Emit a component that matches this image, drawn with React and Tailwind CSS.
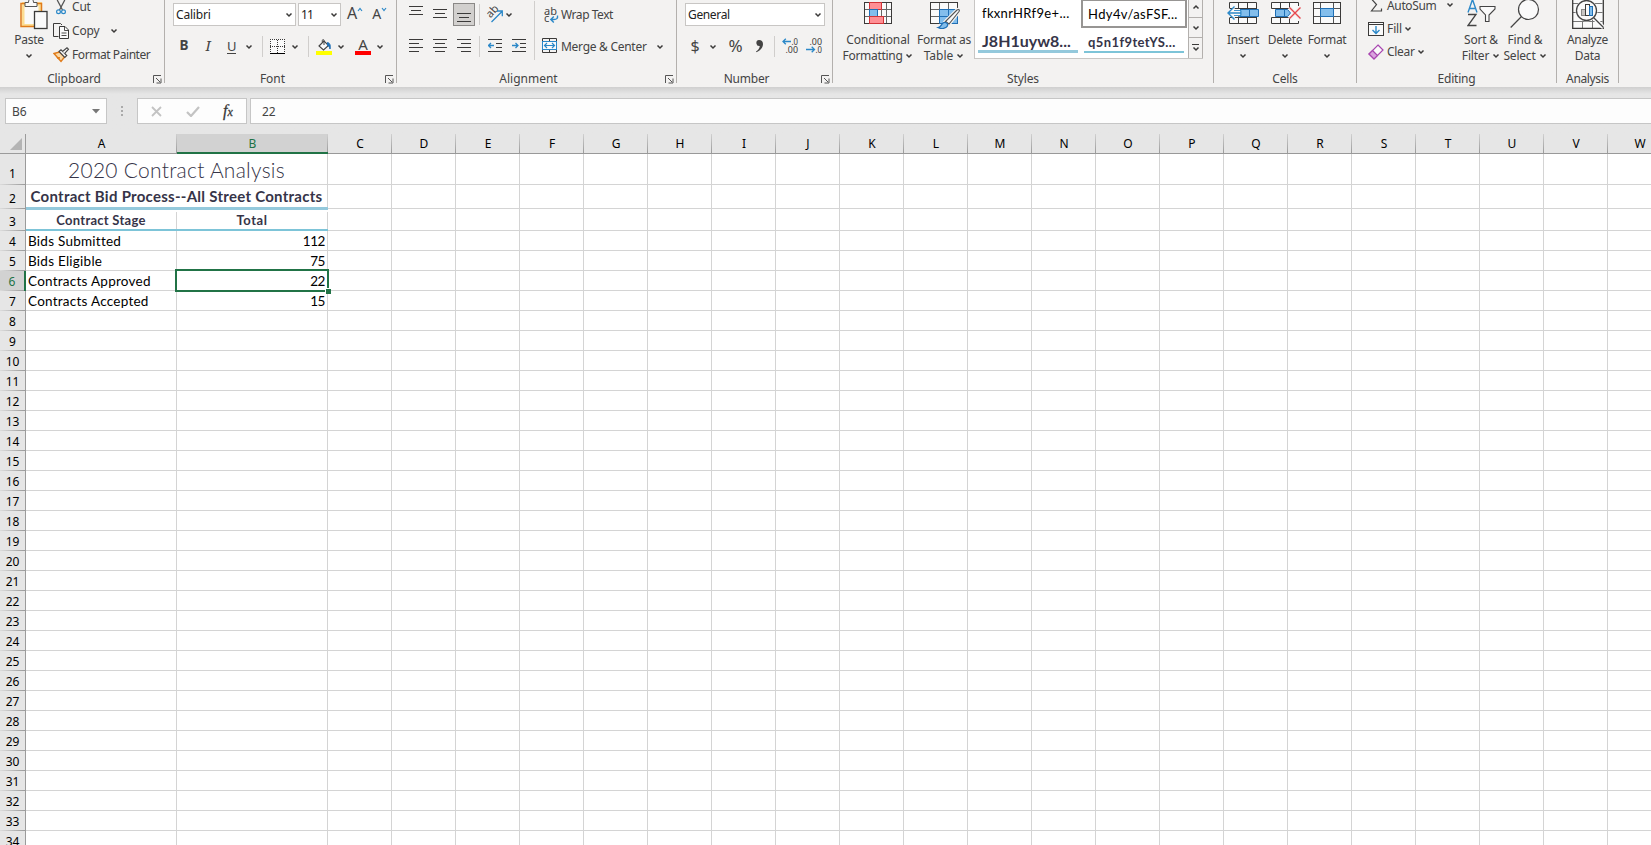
import React from 'react';

const Chev = ({ className = '' }) => (
  <svg className={`shrink-0 ${className}`} width="8" height="6" viewBox="0 0 8 6" fill="none">
    <path d="M1.500 1.500 4 4l2.500-2.500" stroke="#3b3a39" strokeWidth="1.500" />
  </svg>
);

const Launcher = () => (
  <svg width="9" height="9" viewBox="0 0 9 9" fill="none" stroke="#555" className="shrink-0">
    <path d="M.5 8V.5H8M3 3l4 4M8 3.500V8H3.500" />
  </svg>
);

const Sep = ({ className = '' }) => <div className={`w-px shrink-0 bg-[#d0cecc] ${className}`} />;

function Group({ label, width, launcher, pad = '', tracking = '', children }) {
  return (
    <section className={`flex h-[83px] shrink-0 flex-col border-r border-[#b3b0ad] ${width}`}>
      <div className="flex h-[72px] shrink-0">{children}</div>
      <div className="flex h-[11px] items-start">
        <div className={`flex-1 whitespace-nowrap text-center leading-[14px] ${pad} ${tracking}`}>{label}</div>
        {launcher && <div className="-ml-3 mr-[2px] mt-[3px]"><Launcher /></div>}
      </div>
    </section>
  );
}

const Lines = ({ rows, className = '' }) => (
  <svg className={`shrink-0 ${className}`} width="14" height="15" viewBox="0 0 14 15" shapeRendering="crispEdges" fill="#3b3a39">
    {rows.map(([x, w, y]) => <rect key={y} x={x} y={y} width={w} height="1" />)}
  </svg>
);

const PasteIcon = () => (
  <svg width="28" height="30" viewBox="0 0 28 30" fill="none">
    <rect x="2" y="2" width="20" height="24" fill="#fcdd93" />
    <rect x="1" y="3.500" width="20.500" height="23" stroke="#e07b1a" strokeWidth="1.500" />
    <rect x="4.500" y="6" width="14" height="18" fill="#fafafa" />
    <path d="M5 6.500V2.500h3.500C8.500 0 9.500-1 11-1s2.500 1 2.500 3.500H17v4z" fill="#fafafa" stroke="#555" />
    <rect x="14.500" y="11.500" width="12.500" height="17" fill="#fafafa" stroke="#3b3a39" strokeWidth="1.300" />
  </svg>
);
const CutIcon = () => (
  <svg width="16" height="16" viewBox="0 0 16 16" fill="none">
    <path d="M4.200 0l5.300 10M11.800 0L6.500 10" stroke="#555" strokeWidth="1.300" />
    <circle cx="5.500" cy="11.700" r="1.900" stroke="#2b88c8" strokeWidth="1.200" />
    <circle cx="10.500" cy="11.700" r="1.900" stroke="#2b88c8" strokeWidth="1.200" />
  </svg>
);
const CopyIcon = () => (
  <svg width="17" height="17" viewBox="0 0 17 17" fill="none" stroke="#3b3a39">
    <path d="M5.500 13.500H.5V.5h7L9 2" />
    <path d="M6.500 3.500h5.500l3.500 3.500v8.500h-9z" fill="#fafafa" />
    <path d="M11.500 3.500V7.500h4M8.500 10h5M8.500 12.500h5" strokeWidth=".9" />
  </svg>
);
const PainterIcon = () => (
  <svg width="17" height="16" viewBox="0 0 17 16" fill="none">
    <path d="M1 6.500l5.500-1.500 5 5L8 14.500z" fill="#fbd9a5" stroke="#e07b1a" strokeWidth="1.400" />
    <path d="M4 10.500l3 .3-2 1z" fill="#e07b1a" stroke="#e07b1a" />
    <path d="M6 4.500l2-1.700 5.800 5.700-2 2z" fill="#fafafa" stroke="#444" strokeWidth="1.100" />
    <path d="M9.500 4.500L14 .8l1.500 1.400-4 4.500" fill="#fafafa" stroke="#444" strokeWidth="1.100" />
  </svg>
);
const BordersIcon = () => (
  <svg width="15" height="15" viewBox="0 0 15 15" shapeRendering="crispEdges">
    <rect width="15" height="14" fill="#fafafa" />
    <path d="M0 .5h15M0 7.500h15M.5 0v14M7.500 1v13M14.500 0v14" stroke="#3b3a39" strokeDasharray="1 1" />
    <rect y="14" width="15" height="1" fill="#000" />
  </svg>
);
const FillIcon = () => (
  <svg width="16" height="16" viewBox="0 0 16 16" fill="none">
    <rect y="12" width="16" height="4" fill="#ff0" />
    <path d="M3 7l5-5 4.500 4.500L7.500 11z" fill="#fafafa" stroke="#444" strokeWidth="1.100" />
    <path d="M8 6V1.500C8 .3 6.300.3 6.300 1.500v2" stroke="#444" />
    <path d="M11.500 3.500c2.500.5 3.300 3 2.500 6.500-.4-2-1-3-2.500-3.500z" fill="#1f6fb5" stroke="#1f6fb5" />
  </svg>
);
const OrientIcon = () => (
  <svg width="17" height="17" viewBox="0 0 17 17" fill="none" overflow="visible">
    <text x="0" y="0" transform="translate(4.500 12.500) rotate(-48)" fontSize="11" fill="#444" fontFamily="Noto Sans">ab</text>
    <path d="M5.500 16L16 5.500M11 5h5.300v5.300" stroke="#2b88c8" strokeWidth="1.300" />
  </svg>
);
const WrapIcon = () => (
  <svg width="15" height="18" viewBox="0 0 15 18" fill="none" overflow="visible">
    <text x="0" y="8.500" fontSize="11" fill="#444" fontFamily="Noto Sans">ab</text>
    <text x="0" y="16" fontSize="11" fill="#444" fontFamily="Noto Sans">c</text>
    <path d="M13.500 9.500c.5 3-1 4-3.500 4H7M9.800 10.500L6.800 13.500l3 3" stroke="#2b88c8" strokeWidth="1.400" />
  </svg>
);
const MergeIcon = () => (
  <svg width="15" height="15" viewBox="0 0 15 15" fill="none">
    <path d="M.5 3V.5h14V3M.5 12v2.500h14V12M7.500.5V3M7.500 12v2.500" stroke="#3b3a39" />
    <rect x=".5" y="3.500" width="14" height="8" fill="#fafafa" stroke="#2b88c8" />
    <path d="M2.500 7.500h10M5 5L2.500 7.500 5 10M10 5l2.500 2.500L10 10" stroke="#2b88c8" strokeWidth="1.200" />
  </svg>
);
const IndentIcon = ({ right, className = '' }) => (
  <svg className={`shrink-0 ${className}`} width="15" height="15" viewBox="0 0 15 15" fill="none">
    <path d="M0 1.500h14M8 5.500h6M8 9.500h6M0 13.500h14" stroke="#3b3a39" />
    {right ? <path d="M0 7.500h6M3.500 5L6 7.500 3.500 10" stroke="#2b88c8" strokeWidth="1.300" />
      : <path d="M.5 7.500H6M3 5L.5 7.500 3 10" stroke="#2b88c8" strokeWidth="1.300" />}
  </svg>
);
const DecimalIcon = ({ inc, className = '' }) => (
  <svg className={`shrink-0 ${className}`} width="17" height="17" viewBox="0 0 17 17" fill="none" overflow="visible">
    <g fontSize="9.500" fill="#3b3a39" fontFamily="Noto Sans">
      <text x="16" y="7.500" textAnchor="end" textLength={inc ? 6.5 : 12.5} lengthAdjust="spacingAndGlyphs">{inc ? '.0' : '.00'}</text>
      <text x="16" y="16" textAnchor="end" textLength={inc ? 12.5 : 6.5} lengthAdjust="spacingAndGlyphs">{inc ? '.00' : '.0'}</text>
    </g>
    {inc ? <path d="M1 4.500h8M3.800 1.700L1 4.500l2.800 2.800" stroke="#2b88c8" strokeWidth="1.300" />
      : <path d="M0 12.500h8.500M5.700 9.700l2.800 2.800-2.800 2.800" stroke="#2b88c8" strokeWidth="1.300" />}
  </svg>
);
const CondIcon = () => (
  <svg width="28" height="22" viewBox="0 0 28 22" fill="none">
    <rect width="28" height="22" fill="#fafafa" />
    <path d="M0 7.500h28M0 14.500h28M5.500 0v22M17.500 0v22M22.500 0v22" stroke="#666" />
    <rect x=".5" y=".5" width="27" height="21" stroke="#3b3a39" />
    <rect x="5.500" y=".5" width="12" height="7" fill="#ff8f94" stroke="#d13438" />
    <rect x="5.500" y="7.500" width="8" height="7" fill="#83beec" stroke="#1f6fb5" />
    <rect x="5.500" y="14.500" width="14" height="7" fill="#ff8f94" stroke="#d13438" />
  </svg>
);
const TableIcon = () => (
  <svg width="30" height="27" viewBox="0 0 30 27" fill="none">
    <rect width="28" height="22" fill="#fafafa" />
    <path d="M0 7.500h28M0 14.500h28M9.500 0v22M18.500 0v22" stroke="#666" />
    <rect x=".5" y=".5" width="27" height="21" stroke="#3b3a39" />
    <path d="M9.500 7.500h18v14h-18zM9.500 14.500h18M18.500 7.500v14" fill="#83beec" stroke="#1f6fb5" />
    <path d="M15.500 19.500L27 8c1.500-1.200 3 0 2 1.500L19 22z" fill="#fafafa" stroke="#f3f2f1" strokeWidth="3.500" />
    <path d="M15.500 19.500L27 8c1.500-1.200 3 0 2 1.500L19 22z" fill="#fafafa" stroke="#555" strokeWidth="1.100" />
    <path d="M8 25.500c3 0 3-3 5-4.500s5 0 4.700 2.200C17 26.500 11 27.500 8 25.500z" fill="#83beec" stroke="#1f6fb5" strokeWidth="1.200" />
  </svg>
);
const InsertIcon = () => (
  <svg width="33" height="22" viewBox="0 0 33 22" fill="none">
    <rect x="2" width="28" height="22" fill="#fafafa" />
    <path d="M2.500 6V.5h27V21.500h-27V16M2.500 6.500h27M2.500 15.500h27M11.500 0v22M20.500 0v22" stroke="#3b3a39" />
    <path d="M12 7.500h19.500v7H12z M22.500 7.500v7" fill="#83beec" stroke="#1f6fb5" />
    <path d="M13 7H7.500l1-3L1 10.800l7.500 7-1-3.500H13z" fill="#fafafa" />
    <path d="M7.500 4.500L1 11l6.500 6.500M2 11h12" stroke="#2b88c8" strokeWidth="1.400" />
    <path d="M7 8.500h7v5H7" stroke="#2b88c8" strokeWidth=".9" />
  </svg>
);
const DeleteIcon = () => (
  <svg width="31" height="22" viewBox="0 0 31 22" fill="none">
    <rect width="28" height="22" fill="#fafafa" />
    <path d="M.5 6.500V.5h27V4M.5 15.500v6h27V19M.5 6.500h20M.5 15.500h20M9.500 0v6M18.500 0v6M9.500 16v6M18.500 16v6" stroke="#3b3a39" />
    <path d="M4.500 7.500h12l3 3.500-3 3.500h-12zM13.500 7.500v7" fill="#83beec" stroke="#1f6fb5" />
    <path d="M18.500 5.500l11 11M29.500 5.500l-11 11" stroke="#f3f2f1" strokeWidth="4" />
    <path d="M18.500 5.500l11 11M29.500 5.500l-11 11" stroke="#e8484d" strokeWidth="1.400" />
  </svg>
);
const FormatIcon = () => (
  <svg width="28" height="22" viewBox="0 0 28 22" fill="none">
    <rect width="28" height="22" fill="#fafafa" />
    <path d="M0 6.500h28M0 14.500h28M7.500 0v22M20.500 0v22" stroke="#555" />
    <rect x=".5" y=".5" width="27" height="21" stroke="#3b3a39" />
    <rect x="7.500" y="6.500" width="13" height="8" fill="#83beec" stroke="#1f6fb5" />
  </svg>
);
const SumIcon = () => (
  <svg width="13" height="12" viewBox="0 0 13 12" fill="none">
    <path d="M1.500-1l5 5.500L1.500 11H11.500V8.500" stroke="#444" strokeWidth="1.200" />
  </svg>
);
const FillDownIcon = () => (
  <svg width="16" height="14" viewBox="0 0 16 14" fill="none">
    <rect x=".5" y=".5" width="15" height="13" fill="#fafafa" stroke="#3b3a39" />
    <path d="M0 2.500h16" stroke="#3b3a39" />
    <path d="M8 4v7.500M4.500 8L8 11.500 11.500 8" stroke="#2b88c8" strokeWidth="1.400" />
  </svg>
);
const ClearIcon = () => (
  <svg width="16" height="16" viewBox="0 0 16 16" fill="none" stroke="#a846b0" strokeWidth="1.200">
    <path d="M10 1l5 5-9 9-5-5z" fill="#fafafa" />
    <path d="M4.500 6.500l5 5L6 15l-5-5z" fill="#d9a3de" />
  </svg>
);
const SortIcon = () => (
  <svg width="29" height="27" viewBox="0 0 29 27" fill="none">
    <path d="M1 12.500L5.500-.5 10 12.500M2.500 8.500h6" stroke="#2b88c8" strokeWidth="1.400" />
    <path d="M1 14.500h8L1 25.500h8.500" stroke="#444" strokeWidth="1.300" />
    <path d="M13 6.500h15v2.500l-6 6v6.500h-3.500V15l-5.500-6z" fill="#fafafa" stroke="#444" strokeWidth="1.100" />
  </svg>
);
const FindIcon = () => (
  <svg width="30" height="28" viewBox="0 0 30 28" fill="none" stroke="#444" strokeWidth="1.200">
    <circle cx="18.500" cy="9.500" r="10" fill="#fafafa" />
    <path d="M11.500 16.500L.7 27.500" />
  </svg>
);
const AnalyzeIcon = () => (
  <svg width="32" height="29" viewBox="0 0 32 29" fill="none">
    <rect width="31" height="28.500" fill="#fafafa" />
    <path d="M.5 3.500h30M.5 12.500h30M.5 21.500h30M10.500 19v9M20.500 19v9" stroke="#777" />
    <path d="M.7 0v28.300h30.600V0" stroke="#3b3a39" strokeWidth="1.300" />
    <path d="M22 18l9.500 9.500" stroke="#fafafa" strokeWidth="4" />
    <circle cx="14.500" cy="10.500" r="11" fill="#fafafa" />
    <circle cx="14.500" cy="10.500" r="10" fill="#fafafa" stroke="#444" strokeWidth="1.300" />
    <path d="M21.500 17.500L31.500 27.500" stroke="#444" strokeWidth="1.300" />
    <rect x="9.500" y="9.500" width="4" height="6" fill="#c8c6c4" stroke="#888" />
    <rect x="13.500" y="4.500" width="4" height="11" fill="#fafafa" stroke="#3b3a39" />
    <rect x="17.500" y="6.500" width="3" height="9" fill="#83beec" stroke="#1f6fb5" />
  </svg>
);

const Big = ({ icon, l1, l2, chev, width, l1c = '', l2c = '', iconH = 'h-[32px]', ml = '' }) => (
  <div className={`flex shrink-0 flex-col items-center whitespace-nowrap ${width} ${ml}`}>
    <div className={`flex w-full justify-center ${iconH}`}>{icon}</div>
    <div className={`h-4 leading-4 ${l1c}`}>{l1}</div>
    <div className="flex h-4 items-center gap-[3px] leading-4">
      {l2 && <span className={l2c}>{l2}</span>}
      {chev && <Chev />}
    </div>
  </div>
);

function Ribbon() {
  return (
    <header className="flex h-[87px] shrink-0 overflow-hidden bg-[#f3f2f1] text-[12px] text-[#444]">
      <Group label="Clipboard" width="w-[165px]" launcher pad="pr-[17px]" tracking="tracking-[-0.100px]">
        <Big width="w-[38px]" ml="ml-[10px]" icon={<div className="pl-[9px]"><PasteIcon /></div>} l1="Paste" chev l1c="tracking-[-0.300px]" />
        <div className="ml-[5px] flex flex-col whitespace-nowrap">
          <div className="flex h-[19px]"><CutIcon /><span className="ml-[3px] leading-[14px] tracking-[-0.200px]">Cut</span></div>
          <div className="flex h-6 items-center"><CopyIcon /><span className="ml-[2px] tracking-[-0.200px]">Copy</span><Chev className="ml-[11px]" /></div>
          <div className="flex h-6 items-center"><PainterIcon /><span className="ml-[2px] tracking-[-0.430px]">Format Painter</span></div>
        </div>
      </Group>

      <Group label="Font" width="w-[232px]" launcher pad="pr-[17px]">
        <div className="ml-2 flex flex-col">
          <div className="mt-[3px] flex h-[23px] items-center">
            <div className="flex h-[23px] w-[123px] items-center justify-between border border-[#c8c6c4] bg-white pl-[2px] pr-[2px] text-[#222]"><span className="tracking-[-0.200px]">Calibri</span><Chev /></div>
            <div className="ml-[2px] flex h-[23px] w-[43px] items-center justify-between border border-[#c8c6c4] bg-white pl-[2px] pr-[2px] text-[#222]"><span className="tracking-[-0.800px]">11</span><Chev /></div>
            <span className="-mt-[3px] ml-[6px] text-[16px] leading-none">A</span>
            <svg className="mb-[11px]" width="6" height="5" viewBox="0 0 6 5" fill="none"><path d="M1 4l2-2.500L5 4" stroke="#2b88c8" strokeWidth="1.200" /></svg>
            <span className="-mt-px ml-[9px] text-[14px] leading-none">A</span>
            <svg className="mb-[11px]" width="6" height="5" viewBox="0 0 6 5" fill="none"><path d="M1 1l2 2.500L5 1" stroke="#2b88c8" strokeWidth="1.200" /></svg>
          </div>
          <div className="mt-[10px] flex h-[21px] items-center">
            <span className="-mt-[2px] ml-[6px] w-[10px] text-center text-[13.500px] font-bold">B</span>
            <span className="-mt-[2px] ml-[14px] w-[10px] text-center font-['Noto_Serif','Liberation_Serif',serif] text-[14px] italic">I</span>
            <span className="ml-[14px] w-[9px] border-b border-[#444] text-center text-[13px] leading-[14px]">U</span>
            <Chev className="ml-[9px]" />
            <Sep className="ml-[9px] h-[21px]" />
            <div className="ml-[7px]"><BordersIcon /></div>
            <Chev className="ml-[6px]" />
            <Sep className="ml-[9px] h-[21px]" />
            <div className="ml-[7px]"><FillIcon /></div>
            <Chev className="ml-[5px]" />
            <div className="ml-[10px] flex w-4 flex-col items-center"><span className="h-3 text-[15px] leading-[10px]">A</span><div className="h-[4px] w-4 bg-[#f00]" /></div>
            <Chev className="ml-[5px]" />
          </div>
        </div>
      </Group>

      <Group label="Alignment" width="w-[280px]" launcher pad="pr-[17px]">
        <div className="ml-3 flex flex-col">
          <div className="mt-[3px] flex h-[23px] items-center">
            <Lines rows={[[0, 14, 0], [2, 10, 4], [0, 14, 8]]} className="-mt-[2px]" />
            <Lines className="-mt-[2px] ml-[10px]" rows={[[0, 14, 3], [2, 10, 7], [0, 14, 11]]} />
            <div className="ml-[6px] flex h-[23px] w-[22px] items-end justify-center border border-[#8a8886] bg-[#d2d0ce] pb-[2px]"><Lines rows={[[0, 14, 5], [2, 10, 9], [0, 14, 13]]} /></div>
            <Sep className="ml-[4px] h-[21px]" />
            <div className="ml-[6px] -mt-px"><OrientIcon /></div>
            <Chev className="ml-[2px]" />
          </div>
          <div className="mt-[10px] flex h-[21px] items-center">
            <Lines rows={[[0, 14, 0], [0, 10, 4], [0, 14, 8], [0, 10, 12]]} />
            <Lines className="ml-[10px]" rows={[[0, 14, 0], [2, 10, 4], [0, 14, 8], [2, 10, 12]]} />
            <Lines className="ml-[10px]" rows={[[0, 14, 0], [4, 10, 4], [0, 14, 8], [4, 10, 12]]} />
            <Sep className="ml-[8px] h-[21px]" />
            <IndentIcon className="ml-[8px] -mt-[2px]" />
            <IndentIcon className="ml-[9px] -mt-[2px]" right />
          </div>
        </div>
        <Sep className="ml-[7px] mt-px h-[59px]" />
        <div className="ml-[7px] flex flex-col whitespace-nowrap">
          <div className="mt-[3px] flex h-[23px] items-center"><div className="ml-[2px]"><WrapIcon /></div><span className="ml-[2px] tracking-[-0.450px]">Wrap Text</span></div>
          <div className="mt-[9px] flex h-[23px] items-center"><div className="-mt-[3px]"><MergeIcon /></div><span className="ml-[4px] tracking-[-0.280px]">Merge &amp; Center</span><Chev className="ml-[9px]" /></div>
        </div>
      </Group>

      <Group label="Number" width="w-[156px]" launcher pad="pr-[17px]" tracking="tracking-[-0.200px]">
        <div className="ml-2 flex flex-col">
          <div className="mt-[3px] flex h-[23px] w-[140px] items-center justify-between border border-[#c8c6c4] bg-white px-[2px] text-[#222]"><span className="tracking-[-0.350px]">General</span><Chev /></div>
          <div className="mt-[10px] flex h-[21px] items-center">
            <span className="-mt-px ml-[5px] w-[10px] text-center text-[16px] leading-[20px]">$</span>
            <Chev className="ml-[9px]" />
            <span className="-mt-px ml-[10px] w-[16px] text-center text-[17px] leading-[20px] tracking-[-1px]">%</span>
            <svg className="-mt-px ml-[12px]" width="9" height="14" viewBox="0 0 9 14"><path d="M4 1a3 3 0 1 0 .8 6C4.500 9.500 3 11.500 1 12.500l.5.7C5.500 11.500 8 8.500 8 5 8 2.500 6.500 1 4 1z" fill="#444" /></svg>
            <Sep className="ml-[10px] h-[21px]" />
            <DecimalIcon inc className="ml-[7px] -mt-[2px]" />
            <DecimalIcon className="ml-[7px] -mt-[2px]" />
          </div>
        </div>
      </Group>

      <Group label="Styles" width="w-[381px]" tracking="tracking-[-0.100px]">
        <Big width="w-[70px]" ml="ml-[10px]" icon={<div className="pt-[2px]"><CondIcon /></div>} l1="Conditional" l2="Formatting" chev l1c="tracking-[-0.100px]" l2c="tracking-[-0.300px]" />
        <Big width="w-[62px]" icon={<div className="pl-[2px] pt-[2px]"><TableIcon /></div>} l1="Format as" l2="Table" chev l1c="tracking-[-0.270px]" />
        <div className="ml-[-1px] flex h-[59px] border-b border-l border-[#c8c6c4] bg-white font-['Lato'] text-[13px] text-black">
          <div className="flex w-[106px] flex-col whitespace-nowrap pl-[3px]">
            <div className="h-[28px] pl-1 leading-[27px] tracking-[0.320px]">fkxnrHRf9e+...</div>
            <div className="h-[25px] w-[100px] border-b-[3px] border-[#94c9dc] pl-1 text-[16px] font-bold leading-[25px] text-[#363448]">J8H1uyw8...</div>
          </div>
          <div className="flex w-[107px] flex-col whitespace-nowrap">
            <div className="h-[28px] w-[106px] border-2 border-t border-[#979593] pl-[5px] leading-[26px] tracking-[0.400px]">Hdy4v/asFSF...</div>
            <div className="ml-[3px] h-[25px] w-[100px] border-b-2 border-[#7dc4d8] pl-1 font-bold leading-[28px] tracking-[0.400px] text-[#363448]">q5n1f9tetYS...</div>
          </div>
          <div className="flex w-[15px] flex-col border-x border-[#b3b0ad] bg-[#f3f2f1]">
            <div className="flex h-[18px] items-center justify-center border-b border-[#b3b0ad] pb-[4px]"><Chev className="rotate-180" /></div>
            <div className="flex h-[20px] items-center justify-center border-b border-[#b3b0ad]"><Chev /></div>
            <div className="flex flex-1 flex-col items-center justify-center gap-px"><div className="h-px w-[7px] bg-[#3b3a39]" /><Chev /></div>
          </div>
        </div>
      </Group>

      <Group label="Cells" width="w-[143px]" tracking="tracking-[-0.200px]">
        <Big width="w-[44px]" ml="ml-[7px]" icon={<div className="pt-[2px]"><InsertIcon /></div>} l1="Insert" chev l1c="tracking-[-0.200px]" />
        <Big width="w-[40px]" icon={<div className="pl-[2px] pt-[2px]"><DeleteIcon /></div>} l1="Delete" chev l1c="tracking-[-0.350px]" />
        <Big width="w-[44px]" icon={<div className="pt-[2px]"><FormatIcon /></div>} l1="Format" chev l1c="tracking-[-0.350px]" />
      </Group>

      <Group label="Editing" width="w-[200px]" tracking="tracking-[-0.200px]">
        <div className="ml-[11px] flex w-[88px] flex-col whitespace-nowrap">
          <div className="flex h-[17px]"><div className="ml-[2px]"><SumIcon /></div><span className="ml-[4px] leading-[12px] tracking-[-0.350px]">AutoSum</span><Chev className="ml-[10px] mt-[2px]" /></div>
          <div className="flex h-[23px] items-center"><FillDownIcon /><span className="ml-[3px] tracking-[-0.100px]">Fill</span><Chev className="ml-[2px]" /></div>
          <div className="flex h-[23px] items-center"><ClearIcon /><span className="ml-[3px] tracking-[-0.300px]">Clear</span><Chev className="ml-[2px]" /></div>
        </div>
        <Big width="w-[50px]" icon={<SortIcon />} l1="Sort &amp;" l2="Filter" chev l1c="tracking-[-0.200px]" l2c="tracking-[-0.200px]" />
        <Big width="w-[38px]" icon={<FindIcon />} l1="Find &amp;" l2="Select" chev l1c="tracking-[-0.200px]" l2c="tracking-[-0.200px]" />
      </Group>

      <Group label="Analysis" width="w-[62px]" tracking="tracking-[-0.350px]">
        <Big width="w-[61px]" icon={<AnalyzeIcon />} l1="Analyze" l2="Data" l1c="tracking-[-0.350px]" l2c="tracking-[-0.300px]" />
      </Group>
    </header>
  );
}

function FormulaBar() {
  return (
    <div className="flex h-[47px] shrink-0 bg-[#e6e6e6] bg-linear-to-b from-[#cfcfcf] to-[#e6e6e6] to-[7px] pl-[5px] pt-[11px] text-[13px] text-[#444]">
      <div className="flex h-[26px] w-[102px] items-center justify-between border border-[#c6c6c6] bg-[#fdfdfd] pl-[6px] pr-[6px]">
        <span className="pt-px text-[12px]">B6</span>
        <svg width="8" height="5" viewBox="0 0 8 5"><path d="M0 0h8L4 4.500z" fill="#777" /></svg>
      </div>
      <div className="ml-[14px] flex h-[26px] w-[2px] flex-col items-center justify-center gap-[2px]">
        <i className="h-[2px] w-[2px] bg-[#aaa]" /><i className="h-[2px] w-[2px] bg-[#aaa]" /><i className="h-[2px] w-[2px] bg-[#aaa]" />
      </div>
      <div className="ml-[14px] flex h-[26px] w-[110px] items-center border border-[#c6c6c6] bg-[#fdfdfd]">
        <svg className="ml-[13px]" width="11" height="11" viewBox="0 0 11 11"><path d="M1 1l9 9M10 1L1 10" stroke="#c3c3c3" strokeWidth="1.800" /></svg>
        <svg className="ml-[24px]" width="14" height="11" viewBox="0 0 14 11" fill="none"><path d="M1 6l4 4 8-9" stroke="#c3c3c3" strokeWidth="2.200" /></svg>
        <span className="-mt-px ml-[23px] font-['Liberation_Serif',serif] text-[16px] italic leading-none text-[#333] [-webkit-text-stroke:0.300px_#444]">f<span className="text-[12px]">x</span></span>
      </div>
      <div className="ml-[3px] flex h-[26px] flex-1 items-center border border-r-0 border-[#c6c6c6] bg-[#fdfdfd] pl-[11px]"><span className="pt-px text-[12px]">22</span></div>
    </div>
  );
}

const COLS = 'ABCDEFGHIJKLMNOPQRSTUVW'.split('');
const ROWS = Array.from({ length: 34 }, (_, i) => i + 1);
const DATA = {
  4: ['Bids Submitted', '112'],
  5: ['Bids Eligible', '75'],
  6: ['Contracts Approved', '22'],
  7: ['Contracts Accepted', '15'],
};
const rowHeight = (r) => (r === 1 ? 'h-[31px]' : r === 2 ? 'h-[24px]' : r === 3 ? 'h-[22px]' : 'h-5');
const line = 'border-b border-r border-[#d4d4d4]';

function Leading({ r }) {
  if (r === 1) {
    return <div className={`flex w-[302px] shrink-0 items-center justify-center whitespace-nowrap pt-px text-[21px] font-light tracking-[0.260px] text-[#363448] ${line}`}>2020 Contract Analysis</div>;
  }
  if (r === 2) {
    return (
      <div className={`relative flex w-[302px] shrink-0 items-center justify-center whitespace-nowrap text-[15px] font-bold tracking-[0.270px] text-[#363448] ${line}`}>
        Contract Bid Process--All Street Contracts
        <div className="absolute -bottom-[2px] -right-px left-0 h-[3px] bg-[#94c9dc]" />
      </div>
    );
  }
  if (r === 3) {
    return (
      <div className="flex w-[302px] shrink-0 border-b-2 border-[#7dc4d8] pt-[3px] text-[13px] font-bold tracking-[0.270px] text-[#363448]">
        <div className="flex w-[151px] items-center justify-center border-r border-[#d4d4d4]">Contract Stage</div>
        <div className="flex w-[151px] items-center justify-center border-r border-[#d4d4d4] tracking-[0.600px]">Total</div>
      </div>
    );
  }
  const [a, b] = DATA[r] || ['', ''];
  return (
    <>
      <div className={`flex w-[151px] shrink-0 items-center whitespace-nowrap pl-[2px] pt-[2px] text-[13.500px] tracking-[0.250px] ${line}`}>{a}</div>
      <div className={`relative flex w-[151px] shrink-0 items-center justify-end pr-[2px] pt-[2px] text-[13.500px] tracking-[-0.450px] ${line}`}>
        {b}
        {r === 6 && (
          <>
            <div className="absolute -inset-[2px] z-10 border-2 border-[#217346]" />
            <div className="absolute -bottom-[4px] -right-[4px] z-20 h-[6px] w-[6px] border-l border-t border-white bg-[#217346]" />
          </>
        )}
      </div>
    </>
  );
}

function Sheet() {
  return (
    <main className="flex min-h-0 flex-1 flex-col overflow-hidden bg-white text-black">
      <div className="flex h-5 shrink-0 bg-[#e6e6e6] text-[12px]">
        <div className="flex w-[26px] shrink-0 items-end justify-end border-b border-r border-[#9b9b9b] pb-[3px] pr-[3px]">
          <svg width="12" height="12" viewBox="0 0 12 12"><path d="M12 0v12H0z" fill="#b4b4b4" /></svg>
        </div>
        {COLS.map((c, i) => (
          <div key={c} className={`flex shrink-0 ${i < 2 ? 'w-[151px]' : 'w-16'} ${c === 'B' ? 'border-b-2 border-[#217346] bg-[#d2d2d2] text-[#217346]' : 'border-b border-[#999]'}`}>
            <div className="flex-1 pl-px text-center leading-[19px]">{c}</div>
            <div className="w-px bg-linear-to-b from-[#d0d0d0] to-[#9b9b9b]" />
          </div>
        ))}
      </div>
      {ROWS.map((r) => (
        <div key={r} className={`flex shrink-0 font-['Lato',sans-serif] ${rowHeight(r)}`}>
          <div className={`flex w-[26px] shrink-0 flex-col font-['Noto_Sans'] text-[12px] ${r === 6 ? 'border-r-2 border-[#217346] bg-[#d2d2d2] text-[#217346]' : 'border-r border-[#9b9b9b] bg-[#e6e6e6]'}`}>
            <div className={`flex min-h-0 flex-1 items-end justify-center ${r < 3 ? 'leading-[18px]' : 'leading-[17px]'} ${r === 1 ? 'pb-px' : ''}`}>{r}</div>
            <div className="h-px bg-linear-to-r from-[#dcdcdc] to-[#9b9b9b]" />
          </div>
          <Leading r={r} />
          {COLS.slice(2).map((c) => <div key={c} className={`w-16 shrink-0 ${line}`} />)}
        </div>
      ))}
    </main>
  );
}

export default function App() {
  return (
    <div className="flex h-screen w-full flex-col overflow-hidden bg-[#e6e6e6] font-['Noto_Sans','Open_Sans',sans-serif]">
      <Ribbon />
      <FormulaBar />
      <Sheet />
    </div>
  );
}
